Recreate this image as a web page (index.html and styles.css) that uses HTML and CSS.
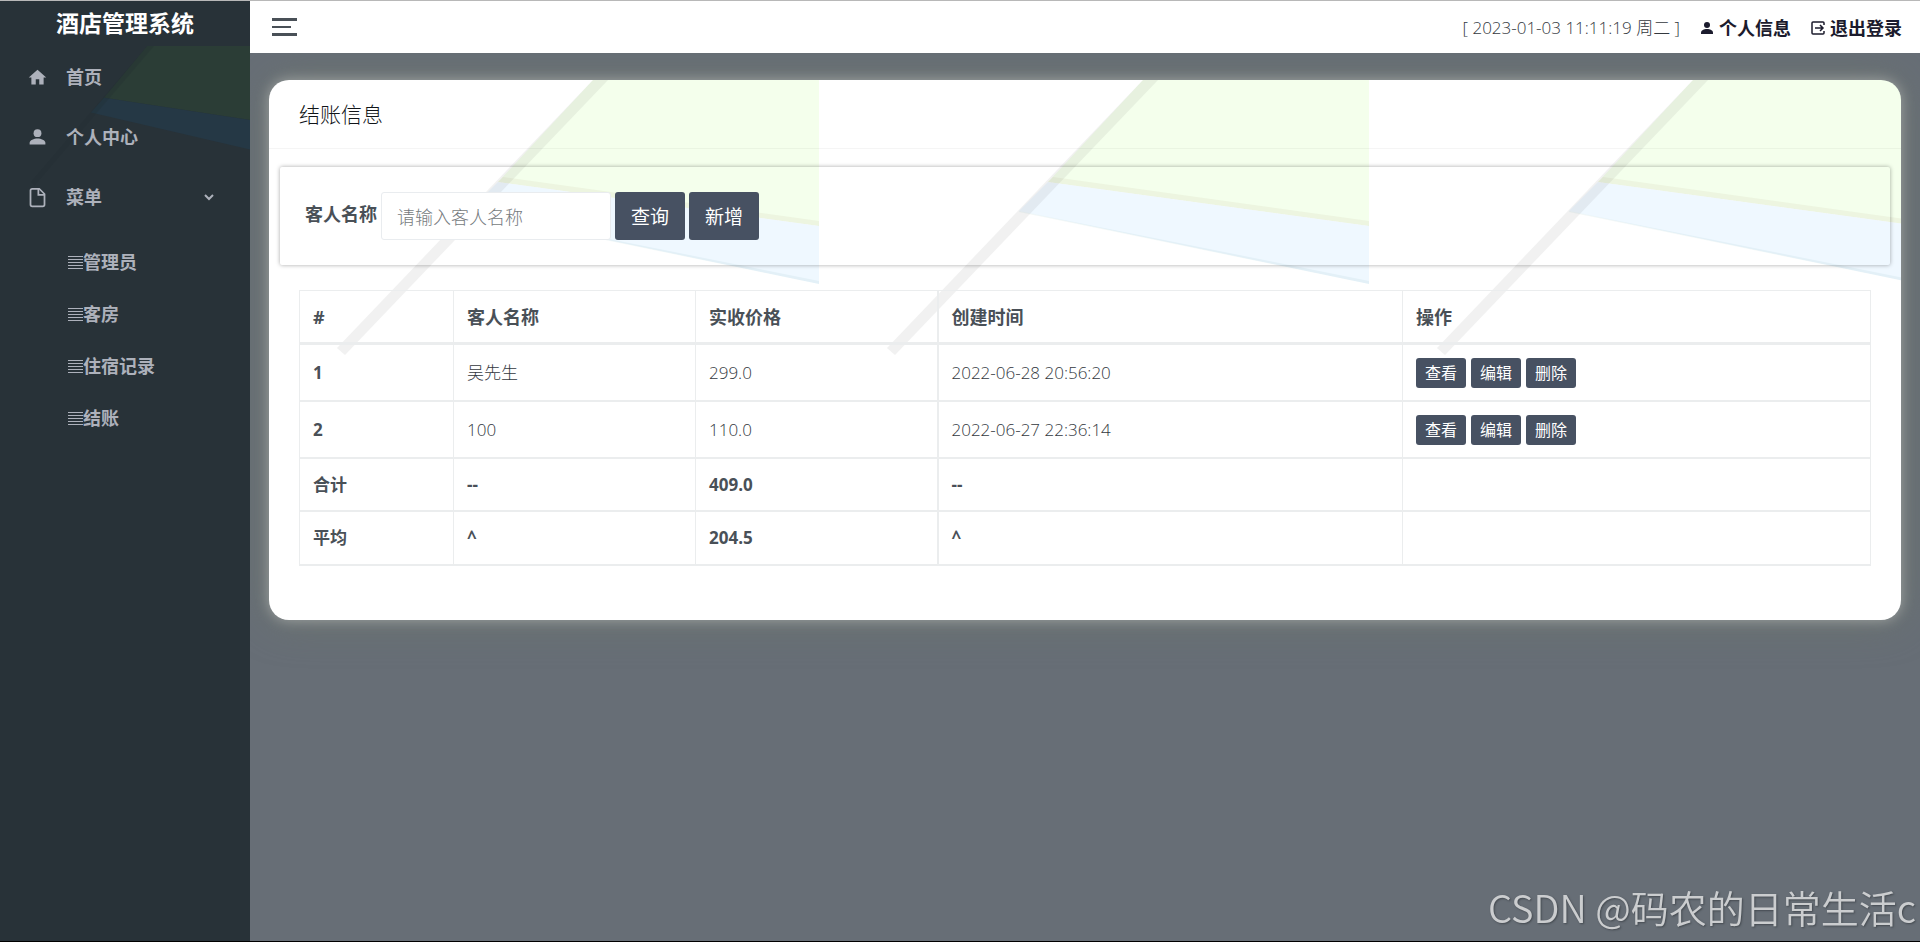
FILE: index.html
```html
<!DOCTYPE html>
<html lang="zh-CN">
<head>
    <meta charset="UTF-8">
    <meta name="viewport" content="width=device-width, initial-scale=1.0">
    <title>酒店管理系统</title>
    <link rel="stylesheet" href="styles.css">
</head>
<body>
    <div class="wrapper">
        <!-- Sidebar -->
        <nav class="sidebar">
            <h1 class="sidebar-title">酒店管理系统</h1>
            <ul class="menu">
                <li>
                    <a href="#">
                        <svg class="icon" viewBox="0 0 24 24"><path d="M10 20v-6h4v6h5v-8h3L12 3 2 12h3v8z"/></svg>
                        <span>首页</span>
                    </a>
                </li>
                <li>
                    <a href="#">
                        <svg class="icon" viewBox="0 0 24 24"><circle cx="12" cy="7" r="4.500"/><path d="M3 20v-2c0-3 5-5 9-5s9 2 9 5v2z"/></svg>
                        <span>个人中心</span>
                    </a>
                </li>
                <li>
                    <a href="#">
                        <svg class="icon icon-line" viewBox="0 0 24 24"><path d="M4 4a2 2 0 0 1 2-2h8l6 6v12a2 2 0 0 1-2 2H6a2 2 0 0 1-2-2z"/><path d="M13 2v7h7"/></svg>
                        <span>菜单</span>
                        <svg class="arrow" viewBox="0 0 10 10"><path d="M1 3l4 4 4-4"/></svg>
                    </a>
                    <ul class="submenu">
                        <li><a href="#"><svg class="list-icon" viewBox="0 0 15 15"><path d="M0 1.500h15M0 4.500h15M0 7.500h15M0 10.500h15M0 13.500h15"/></svg>管理员</a></li>
                        <li><a href="#"><svg class="list-icon" viewBox="0 0 15 15"><path d="M0 1.500h15M0 4.500h15M0 7.500h15M0 10.500h15M0 13.500h15"/></svg>客房</a></li>
                        <li><a href="#"><svg class="list-icon" viewBox="0 0 15 15"><path d="M0 1.500h15M0 4.500h15M0 7.500h15M0 10.500h15M0 13.500h15"/></svg>住宿记录</a></li>
                        <li><a href="#"><svg class="list-icon" viewBox="0 0 15 15"><path d="M0 1.500h15M0 4.500h15M0 7.500h15M0 10.500h15M0 13.500h15"/></svg>结账</a></li>
                    </ul>
                </li>
            </ul>
        </nav>

        <div class="content">
            <!-- Top bar -->
            <header class="topbar">
                <button type="button" class="menu-toggle" aria-label="菜单">
                    <span></span><span></span><span></span>
                </button>
                <div class="topbar-right">
                    <span class="clock">[ 2023-01-03 11:11:19 周二 ]</span>
                    <a href="#">
                        <svg class="top-icon" viewBox="0 0 16 16"><circle cx="8" cy="5" r="3"/><path d="M2 14v-1c0-3 3-4 6-4s6 1 6 4v1z"/></svg>
                        个人信息
                    </a>
                    <a href="#">
                        <svg class="top-icon top-icon-line" viewBox="0 0 16 16"><path d="M14 5V3a1 1 0 0 0-1-1H3a1 1 0 0 0-1 1v10a1 1 0 0 0 1 1h10a1 1 0 0 0 1-1v-2M5 8h8M10 5l3 3-3 3"/></svg>
                        退出登录
                    </a>
                </div>
            </header>

            <main class="card">
                <h2 class="card-title">结账信息</h2>

                <form class="search-box">
                    <label for="guest-name">客人名称</label>
                    <input type="text" id="guest-name" name="guest-name" placeholder="请输入客人名称">
                    <button type="button" class="btn">查询</button>
                    <button type="button" class="btn">新增</button>
                </form>

                <table class="bill-table">
                    <colgroup>
                        <col class="col-index">
                        <col class="col-name">
                        <col class="col-price">
                        <col class="col-time">
                        <col class="col-action">
                    </colgroup>
                    <thead>
                        <tr>
                            <th>#</th>
                            <th>客人名称</th>
                            <th>实收价格</th>
                            <th>创建时间</th>
                            <th>操作</th>
                        </tr>
                    </thead>
                    <tbody>
                        <tr>
                            <th>1</th>
                            <td>吴先生</td>
                            <td>299.0</td>
                            <td>2022-06-28 20:56:20</td>
                            <td>
                                <div class="actions">
                                    <button type="button" class="btn btn-small">查看</button>
                                    <button type="button" class="btn btn-small">编辑</button>
                                    <button type="button" class="btn btn-small">删除</button>
                                </div>
                            </td>
                        </tr>
                        <tr>
                            <th>2</th>
                            <td>100</td>
                            <td>110.0</td>
                            <td>2022-06-27 22:36:14</td>
                            <td>
                                <div class="actions">
                                    <button type="button" class="btn btn-small">查看</button>
                                    <button type="button" class="btn btn-small">编辑</button>
                                    <button type="button" class="btn btn-small">删除</button>
                                </div>
                            </td>
                        </tr>
                    </tbody>
                    <tfoot>
                        <tr>
                            <th>合计</th>
                            <th>--</th>
                            <th>409.0</th>
                            <th>--</th>
                            <th></th>
                        </tr>
                        <tr>
                            <th>平均</th>
                            <th>^</th>
                            <th>204.5</th>
                            <th>^</th>
                            <th></th>
                        </tr>
                    </tfoot>
                </table>
            </main>
        </div>
    </div>
    <div class="watermark">CSDN @码农的日常生活c</div>
</body>
</html>
```
FILE: styles.css
```css
* {
    box-sizing: border-box;
}

body {
    margin: 0;
    font-family: "Open Sans", "Noto Sans CJK SC", sans-serif;
    font-size: 17px;
    line-height: 24px;
    color: #495057;
    background-color: #676e76;
}

a {
    color: inherit;
    text-decoration: none;
}

ul {
    list-style: none;
    margin: 0;
    padding: 0;
}

.wrapper {
    display: flex;
    min-height: 100vh;
    border-top: 1px solid #b8b8b8;
    border-bottom: 1px solid #000;
}

/* Sidebar and top bar stay above the glow of the card */
.sidebar,
.topbar {
    position: relative;
    z-index: 1;
}

/* Sidebar */
.sidebar {
    flex: 0 0 250px;
    background-color: #283238;
    color: #adb1bb;
    font-size: 18px;
    font-weight: bold;
}

.sidebar-title {
    margin: 0;
    padding: 6px 0 7px;
    font-size: 23px;
    line-height: 32px;
    text-align: center;
    color: #fff;
}

.menu {
    padding-top: 1px;
    background: url("data:image/svg+xml,%3Csvg xmlns='http://www.w3.org/2000/svg' viewBox='0 0 550 276' preserveAspectRatio='none'%3E%3Cpath fill='%232b3d36' d='M324 0H550V146L229 102z'/%3E%3Cpath fill='%23253845' d='M229 102L550 146V204L200 131z'/%3E%3Cpath fill='%23202a30' fill-opacity='.25' d='M324 0h15L76 275l-8-7z'/%3E%3C/svg%3E") no-repeat 0 0 / 100% 140px;
}

.menu > li > a {
    display: flex;
    align-items: center;
    height: 60px;
    padding: 0 36px 0 27px;
}

.menu span {
    flex: 1;
}

.icon {
    width: 21px;
    height: 21px;
    margin-right: 18px;
    fill: currentColor;
}

.icon-line {
    fill: none;
    stroke: currentColor;
    stroke-width: 2;
}

.arrow {
    width: 10px;
    height: 10px;
    fill: none;
    stroke: currentColor;
    stroke-width: 2;
}

.submenu {
    padding-top: 9px;
}

.submenu a {
    display: flex;
    align-items: center;
    height: 52px;
    padding-left: 68px;
}

.list-icon {
    width: 15px;
    height: 15px;
    stroke: currentColor;
}

/* Top bar */
.content {
    flex: 1;
    min-width: 0;
}

.topbar {
    display: flex;
    align-items: center;
    justify-content: space-between;
    height: 52px;
    padding: 0 18px 0 22px;
    background-color: #fff;
}

.menu-toggle {
    display: flex;
    flex-direction: column;
    gap: 5px;
    padding: 0;
    border: none;
    background: none;
    cursor: pointer;
}

.menu-toggle span {
    width: 25px;
    height: 3px;
    background-color: #495057;
}

.menu-toggle span:nth-child(2) {
    width: 19px;
    height: 2px;
}

.topbar-right {
    display: flex;
    align-items: center;
    gap: 19px;
    padding-top: 1px;
}

.topbar-right a {
    display: flex;
    align-items: center;
    gap: 4px;
    font-size: 18px;
    font-weight: bold;
    color: #1b1b2d;
}

.clock {
    font-weight: 300;
    color: #33383e;
}

.top-icon {
    width: 16px;
    height: 16px;
    fill: currentColor;
}

.top-icon-line {
    fill: none;
    stroke: currentColor;
    stroke-width: 1.500;
}

/* Card */
.card {
    margin: 27px 19px;
    padding-bottom: 54px;
    border-radius: 20px;
    background: #fff url("data:image/svg+xml,%3Csvg xmlns='http://www.w3.org/2000/svg' viewBox='0 0 550 276' preserveAspectRatio='none'%3E%3Cpath fill='%23f4ffec' d='M324 0H550V146L229 102z'/%3E%3Cpath fill='%23eff8ff' d='M229 102L550 146V204L200 131z'/%3E%3Cpath fill-opacity='.055' d='M324 0h15L76 275l-8-7z'/%3E%3Cpath fill='%23604000' fill-opacity='.05' d='M234 97L550 141v5L229 102z'/%3E%3Cpath fill='%23006060' fill-opacity='.05' d='M200 131L550 201v3L200 132z'/%3E%3C/svg%3E") repeat-x 0 0 / 550px 276px;
    box-shadow: 0 0 14px #a2a5a6, 0 0 40px #6c756d;
}

.card-title {
    margin: 0;
    padding: 20px 30px;
    border-bottom: 1px solid rgba(0, 0, 0, 0.04);
    font-size: 21px;
    line-height: 28px;
    font-weight: 300;
    color: #101418;
}

.search-box {
    display: flex;
    align-items: center;
    gap: 4px;
    margin: 18px 11px 25px;
    padding: 25px;
    border-radius: 2px;
    box-shadow: 0 0 4px rgba(0, 0, 0, 0.35);
}

.search-box label {
    padding-bottom: 4px;
    font-size: 18px;
    font-weight: bold;
}

.search-box input {
    width: 230px;
    height: 48px;
    padding: 2px 15px 0;
    border: 1px solid #e9ecef;
    border-radius: 3px;
    background-color: #fff;
    font: inherit;
    font-size: 18px;
    font-weight: 300;
}

.search-box input::placeholder {
    color: #767b80;
}

.btn {
    height: 48px;
    padding: 1px 16px 0;
    border: none;
    border-radius: 3px;
    background-color: #475162;
    color: #fff;
    font: inherit;
    font-size: 19px;
    font-weight: 400;
    cursor: pointer;
}

.btn-small {
    height: 30px;
    padding: 0 9px;
    font-size: 16px;
}

/* Table */
.bill-table {
    width: calc(100% - 60px);
    margin: 0 30px;
    border-collapse: collapse;
    table-layout: fixed;
    text-align: left;
}

.bill-table th,
.bill-table td {
    height: 53px;
    padding: 1px 13px 0;
    border: 1px solid #ebedee;
    border-bottom-width: 2px;
}

.bill-table td {
    font-weight: 300;
    color: #33383e;
}

.bill-table thead th {
    border-bottom-width: 3px;
    font-size: 18px;
}

.bill-table tbody th,
.bill-table tbody td {
    height: 57px;
}

.bill-table tfoot tr:last-child th {
    height: 54px;
}

.bill-table tr > :nth-child(4) {
    border-left-width: 2px;
}

.col-index {
    width: 154px;
}

.col-name,
.col-price {
    width: 242px;
}

.col-time {
    width: 465px;
}

.actions {
    display: flex;
    gap: 5px;
}

.watermark {
    position: fixed;
    right: 4px;
    bottom: 8px;
    font-family: "Noto Sans CJK SC", sans-serif;
    font-size: 38px;
    line-height: 54px;
    font-weight: 350;
    color: #cbcdcf;
    text-shadow: 1px 1px 2px #444a50;
}
```
